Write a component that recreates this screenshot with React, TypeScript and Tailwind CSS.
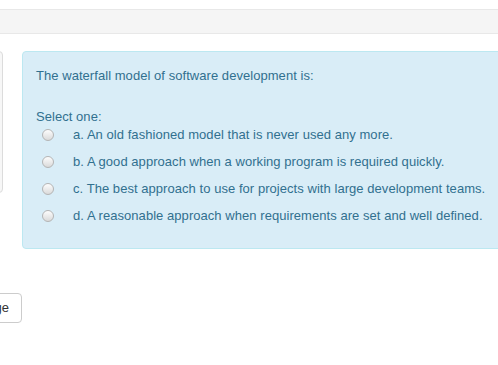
export default function App() {
  const options = [
    'a. An old fashioned model that is never used any more.',
    'b. A good approach when a working program is required quickly.',
    'c. The best approach to use for projects with large development teams.',
    'd. A reasonable approach when requirements are set and well defined.',
  ];

  return (
    <div className="h-[365px] w-[498px] overflow-hidden bg-white text-[13px] font-['Liberation_Sans',Arial,sans-serif]">
      {/* top bar */}
      <div className="mt-[9px] h-[25px] border-y border-[#e8e8e8] bg-[#f5f5f5]" />

      {/* question row */}
      <div className="mt-[17px] flex items-start">
        <div className="-ml-[117px] h-[142px] w-[120px] shrink-0 rounded border border-[#dcdcdc] bg-[#f7f7f7]" />
        <div className="ml-[19px] w-[500px] shrink-0 rounded border border-[#bce8f1] bg-[#d9edf7] pl-[13px] pt-[14px] pb-[19px] tracking-[0.05px] text-[#31708f]">
          <p className="leading-[19px]">The waterfall model of software development is:</p>
          <p className="mt-[22px] leading-[19px]">Select one:</p>
          <div className="-mt-[5px]">
            {options.map((o) => (
              <div key={o} className="flex h-[27px] items-center">
                <span className="ml-[6px] h-[12px] w-[12px] shrink-0 rounded-full border border-[#b4b4b4] bg-gradient-to-b from-[#fdfdfd] to-[#dadada]" />
                <span className="ml-[19px] leading-[19px]">{o}</span>
              </div>
            ))}
          </div>
        </div>
      </div>

      {/* nav button */}
      <div className="mt-[44px] flex">
        <button className="-ml-[58px] h-[30px] w-[80px] rounded border border-[#cccccc] bg-white pr-[12px] text-right text-[#333333]">
          Next page
        </button>
      </div>
    </div>
  );
}
